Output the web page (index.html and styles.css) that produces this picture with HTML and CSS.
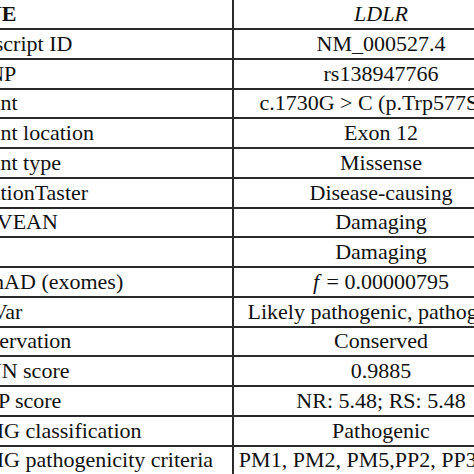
FILE: index.html
```html
<!DOCTYPE html>
<html lang="en">
<head>
<meta charset="utf-8">
<link rel="stylesheet" href="styles.css">
</head>
<body>
<div class="tbl">
  <div class="c l h">GENE</div><div class="c r"><i>LDLR</i></div>
  <div class="c l">Transcript ID</div><div class="c r">NM_000527.4</div>
  <div class="c l">dbSNP</div><div class="c r">rs138947766</div>
  <div class="c l">Variant</div><div class="c r">c.1730G &gt; C (p.Trp577Ser)</div>
  <div class="c l">Variant location</div><div class="c r">Exon 12</div>
  <div class="c l">Variant type</div><div class="c r">Missense</div>
  <div class="c l">MutationTaster</div><div class="c r">Disease-causing</div>
  <div class="c l">PROVEAN</div><div class="c r">Damaging</div>
  <div class="c l">SIFT</div><div class="c r">Damaging</div>
  <div class="c l">gnomAD (exomes)</div><div class="c r"><span><i class="f">f</i> = 0.00000795</span></div>
  <div class="c l">ClinVar</div><div class="c r">Likely pathogenic, pathogenic</div>
  <div class="c l">Conservation</div><div class="c r">Conserved</div>
  <div class="c l">DANN score</div><div class="c r">0.9885</div>
  <div class="c l">GERP score</div><div class="c r">NR: 5.48; RS: 5.48</div>
  <div class="c l">ACMG classification</div><div class="c r">Pathogenic</div>
  <div class="c l">ACMG pathogenicity criteria</div><div class="c r">PM1, PM2, PM5,PP2, PP3, PP4</div>
</div>
</body>
</html>
```
FILE: styles.css
```css
html, body {
  margin: 0;
  padding: 0;
  background: #ffffff;
  overflow: hidden;
}
body {
  width: 474px;
  height: 474px;
  font-family: "Liberation Serif", "Times New Roman", serif;
  font-size: 22px;
  color: #111111;
}
.tbl {
  display: grid;
  grid-template-columns: 288px 296px;
  grid-auto-rows: 29.75px;
  margin: -1.75px 0 0 -56px;
  width: max-content;
  border-top: 2px solid #2a2a2a;
  border-left: 2px solid #2a2a2a;
}
.c {
  box-sizing: border-box;
  border-right: 2px solid #2a2a2a;
  border-bottom: 2px solid #2a2a2a;
  display: flex;
  align-items: center;
  white-space: nowrap;
  overflow: hidden;
}
.l {
  padding-left: 8px;
}
.r {
  justify-content: center;
}
.h {
  font-weight: bold;
}
.f {
  margin-right: 2px;
}
```
